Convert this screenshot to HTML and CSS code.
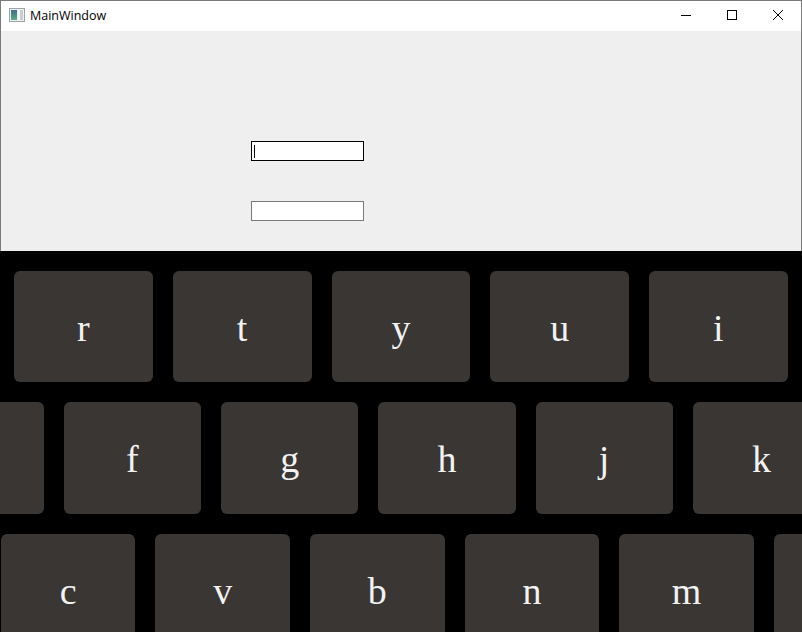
FILE: index.html
```html
<!DOCTYPE html>
<html lang="en">
<head>
<meta charset="utf-8">
<title>MainWindow</title>
<link rel="stylesheet" href="styles.css">
</head>
<body>
<div class="window">
  <header class="titlebar">
    <svg class="app-icon" width="16" height="16" viewBox="0 0 16 16">
      <defs>
        <linearGradient id="pane" x1="0" y1="0" x2="0" y2="1">
          <stop offset="0" stop-color="#3d6f86"/>
          <stop offset="1" stop-color="#5fa98a"/>
        </linearGradient>
      </defs>
      <rect x="0.5" y="1.5" width="15" height="13" fill="#eef1f1" stroke="#9aa3a3"/>
      <rect x="2" y="3" width="6" height="10" fill="url(#pane)"/>
      <rect x="9" y="3" width="2" height="10" fill="#f5f7f7"/>
      <rect x="11" y="3" width="3" height="10" fill="#c6d0d0"/>
    </svg>
    <span class="title">MainWindow</span>
    <div class="controls">
      <button class="ctl"><svg width="10" height="10" viewBox="0 0 10 10"><path d="M0 5.5H10" stroke="#000" fill="none"/></svg></button>
      <button class="ctl"><svg width="10" height="10" viewBox="0 0 10 10"><rect x="0.5" y="0.5" width="9" height="9" stroke="#000" fill="none"/></svg></button>
      <button class="ctl"><svg width="10" height="10" viewBox="0 0 10 10"><path d="M0 0L10 10M10 0L0 10" stroke="#000" fill="none"/></svg></button>
    </div>
  </header>
  <main class="content">
    <div class="field focused"><span class="caret"></span></div>
    <div class="field"></div>
  </main>
</div>
<section class="keyboard">
  <div class="row row-1">
    <div class="key">r</div><div class="key">t</div><div class="key">y</div><div class="key">u</div><div class="key">i</div>
  </div>
  <div class="row row-2">
    <div class="key"></div><div class="key">f</div><div class="key">g</div><div class="key">h</div><div class="key">j</div><div class="key">k</div>
  </div>
  <div class="row row-3">
    <div class="key">c</div><div class="key">v</div><div class="key">b</div><div class="key">n</div><div class="key">m</div><div class="key"></div>
  </div>
</section>
</body>
</html>
```
FILE: styles.css
```css
html, body {
  margin: 0;
  height: 632px;
  overflow: hidden;
  background: #000;
}
.window {
  height: 251px;
  box-sizing: border-box;
  border: 1px solid #7a7a7a;
  border-bottom: 0;
  display: flex;
  flex-direction: column;
}
.titlebar {
  height: 30px;
  flex: none;
  box-sizing: border-box;
  background: #fff;
  display: flex;
  align-items: center;
  padding: 0 0 2px 8px;
}
.app-icon { flex: none; }
.title {
  margin-left: 5px;
  font: 12.5px "Open Sans", "Noto Sans", sans-serif;
  color: #000;
}
.controls {
  margin-left: auto;
  display: flex;
}
.ctl {
  width: 46px;
  height: 28px;
  padding: 0;
  border: 0;
  background: none;
  display: flex;
  align-items: center;
  justify-content: center;
}
.content {
  flex: 1;
  background: #efefef;
  padding: 110px 0 0 250px;
  display: flex;
  flex-direction: column;
  gap: 40px;
}
.field {
  width: 113px;
  height: 20px;
  box-sizing: border-box;
  background: #fff;
  border: 1px solid #7a7a7a;
  padding: 3px 2px;
  display: flex;
}
.field.focused { border-color: #000; }
.caret {
  width: 1px;
  height: 13px;
  background: #000;
}
.keyboard {
  height: 381px;
  overflow: hidden;
  padding-top: 20px;
  box-sizing: border-box;
  display: flex;
  flex-direction: column;
  gap: 20px;
}
.row {
  display: flex;
  flex: none;
  gap: 20px;
}
.key {
  flex: none;
  box-sizing: border-box;
  padding-top: 2px;
  background: #393633;
  border-radius: 6px;
  color: #f2f2f2;
  font: 38px "Liberation Serif", serif;
  display: flex;
  align-items: center;
  justify-content: center;
}
.row-1 { margin-left: 14px; }
.row-1 .key { width: 138.75px; height: 111px; }
.row-2 { margin-left: -93.5px; }
.row-2 .key { width: 137.25px; height: 112px; }
.row-3 { margin-left: 0.8px; }
.row-3 .key { width: 134.6px; height: 112px; }
```
